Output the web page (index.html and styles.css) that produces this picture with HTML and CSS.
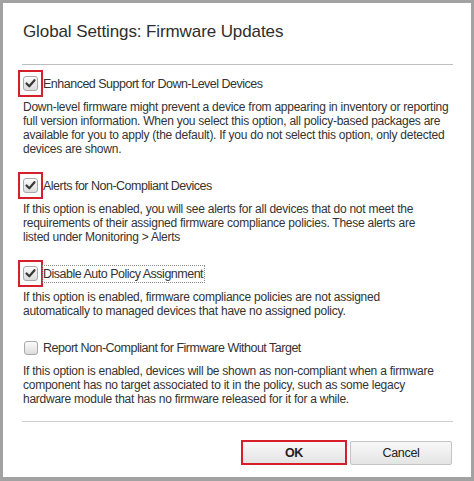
FILE: index.html
```html
<!DOCTYPE html>
<html>
<head>
<meta charset="utf-8">
<link rel="stylesheet" href="styles.css">
</head>
<body>
<div class="dialog">
  <h1 class="title">Global Settings: Firmware Updates</h1>
  <div class="rule"></div>

  <div class="opt">
    <span class="cbwrap hl"><span class="cb checked"><svg viewBox="0 0 15 15" width="15" height="15"><polyline points="3.5,7.5 6.3,10.3 11.5,4.2" /></svg></span></span>
    <span class="label">Enhanced Support for Down-Level Devices</span>
  </div>
  <p class="desc">Down-level firmware might prevent a device from appearing in inventory or reporting<br>full version information. When you select this option, all policy-based packages are<br>available for you to apply (the default). If you do not select this option, only detected<br>devices are shown.</p>

  <div class="opt">
    <span class="cbwrap hl"><span class="cb checked"><svg viewBox="0 0 15 15" width="15" height="15"><polyline points="3.5,7.5 6.3,10.3 11.5,4.2" /></svg></span></span>
    <span class="label">Alerts for Non-Compliant Devices</span>
  </div>
  <p class="desc">If this option is enabled, you will see alerts for all devices that do not meet the<br>requirements of their assigned firmware compliance policies. These alerts are<br>listed under Monitoring &gt; Alerts</p>

  <div class="opt">
    <span class="cbwrap hl"><span class="cb checked"><svg viewBox="0 0 15 15" width="15" height="15"><polyline points="3.5,7.5 6.3,10.3 11.5,4.2" /></svg></span></span>
    <span class="label focus">Disable Auto Policy Assignment</span>
  </div>
  <p class="desc">If this option is enabled, firmware compliance policies are not assigned<br>automatically to managed devices that have no assigned policy.</p>

  <div class="opt">
    <span class="cbwrap"><span class="cb small"></span></span>
    <span class="label">Report Non-Compliant for Firmware Without Target</span>
  </div>
  <p class="desc">If this option is enabled, devices will be shown as non-compliant when a firmware<br>component has no target associated to it in the policy, such as some legacy<br>hardware module that has no firmware released for it for a while.</p>

  <div class="rule bottom"></div>
  <div class="buttons">
    <button class="btn ok">OK</button>
    <button class="btn cancel">Cancel</button>
  </div>
</div>
</body>
</html>
```

FILE: styles.css
```css
html, body {
  margin: 0;
  padding: 0;
  background: #fff;
}
.dialog {
  box-sizing: border-box;
  width: 474px;
  height: 481px;
  border: 3px solid #a2a2a2;
  border-bottom-width: 4px;
  background: #fff;
  padding: 18px 19px 0 20px;
  font-family: "Liberation Sans", Arial, sans-serif;
  color: #333;
}
.title {
  margin: 0;
  font-size: 17px;
  line-height: 21px;
  letter-spacing: -0.1px;
  font-weight: normal;
  color: #2e2e2e;
}
.rule {
  height: 1px;
  background: #bdbdbd;
  margin: 22px -1px 5px -1px;
}
.rule.bottom {
  margin: 15px -1px 18px -1px;
  background: #d0d0d0;
}
.opt {
  display: flex;
  align-items: center;
  height: 27px;
  font-size: 12.5px;
  letter-spacing: -0.5px;
}
.cbwrap {
  box-sizing: border-box;
  width: 25px;
  height: 27px;
  margin-left: -5px;
  display: flex;
  align-items: center;
  justify-content: center;
  border: 2px solid transparent;
}
.cbwrap.hl {
  border-color: #d71f2b;
}
.cb {
  box-sizing: border-box;
  width: 15px;
  height: 15px;
  border: 1px solid #a9a9a9;
  border-radius: 3px;
  background: linear-gradient(#fbfbfb, #dcdcdc);
  display: block;
  position: relative;
}
.cb svg {
  position: absolute;
  left: -1px;
  top: -1px;
}
.cb polyline {
  fill: none;
  stroke: #3a3a3a;
  stroke-width: 2.2;
  stroke-linecap: round;
  stroke-linejoin: round;
}
.cb.small {
  width: 14px;
  height: 14px;
  margin-left: 1px;
}
.label {
  white-space: nowrap;
}
.label.focus {
  outline: 1px dotted #8a8a8a;
  outline-offset: 0;
  padding: 1px 1px 1px 0;
}
.desc {
  margin: 3px 0 16px 0;
  font-size: 12px;
  line-height: 14px;
  letter-spacing: -0.25px;
  white-space: nowrap;
  color: #333;
}
.desc:last-of-type {
  margin-bottom: 0;
}
.buttons {
  display: flex;
  justify-content: flex-end;
  align-items: center;
  gap: 3px;
}
.btn {
  font-family: "Liberation Sans", Arial, sans-serif;
  font-size: 12.5px;
  letter-spacing: -0.3px;
  color: #222;
  box-sizing: border-box;
  border-radius: 2px;
  background: linear-gradient(#f8f8f8, #e4e4e4);
  padding: 0;
  margin: 0;
}
.btn.ok {
  width: 106px;
  height: 25px;
  border: 2px solid #d71f2b;
  font-weight: bold;
  border-radius: 0;
}
.btn.cancel {
  width: 102px;
  height: 24px;
  border: 1px solid #c4c4c4;
}
```
